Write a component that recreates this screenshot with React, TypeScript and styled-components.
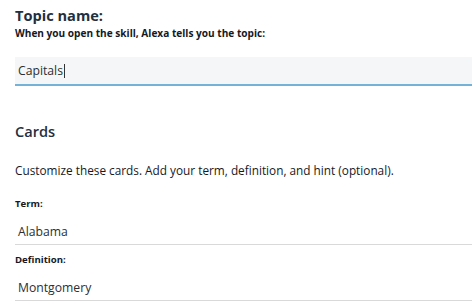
import React from 'react';
import styled, { createGlobalStyle } from 'styled-components';

const GlobalStyle = createGlobalStyle`
  html, body {
    margin: 0;
    padding: 0;
    background: #ffffff;
  }
  body {
    font-family: "Open Sans", "Noto Sans", Arial, sans-serif;
    color: #16191f;
  }
`;

const Page = styled.div`
  width: 474px;
  height: 304px;
  overflow: hidden;
  padding: 4px 2px 0 15px;
  box-sizing: border-box;
  display: flex;
  flex-direction: column;
`;

const Heading = styled.h2`
  margin: 0;
  font-size: 14.6px;
  line-height: 22px;
  font-weight: 700;
  color: #232f3e;
`;

const SectionHeading = styled(Heading)`
  margin-top: 34px;
  font-weight: 600;
`;

const Hint = styled.div`
  font-size: 10.1px;
  line-height: 14px;
  font-weight: 700;
  color: #16191f;
`;

const FieldLabel = styled.div<{ $top: number }>`
  margin-top: ${(p) => p.$top}px;
  font-size: 9.6px;
  line-height: 14px;
  font-weight: 700;
  color: #16191f;
`;

const Description = styled.p`
  margin: 20px 0 0;
  font-size: 11.8px;
  line-height: 16px;
  color: #16191f;
`;

const TextField = styled.div<{ $filled?: boolean }>`
  display: flex;
  align-items: center;
  height: ${(p) => (p.$filled ? 27 : 26)}px;
  margin-top: ${(p) => (p.$filled ? 17 : 7)}px;
  padding-left: 3px;
  background: ${(p) => (p.$filled ? '#f5f6f7' : 'transparent')};
  border-bottom: ${(p) => (p.$filled ? '2px solid #74b2d7' : '1px solid #d9d9d9')};
  font-size: 12.2px;
  color: #2b2f33;
`;

const Caret = styled.span`
  display: inline-block;
  width: 1px;
  height: 14px;
  background: #333;
  margin-left: 1px;
`;

const Value = styled.span``;

export default function App(): JSX.Element {
  return (
    <>
      <GlobalStyle />
      <Page>
        <Heading>Topic name:</Heading>
        <Hint>When you open the skill, Alexa tells you the topic:</Hint>
        <TextField $filled>
          <Value>Capitals</Value>
          <Caret />
        </TextField>
        <SectionHeading>Cards</SectionHeading>
        <Description>Customize these cards. Add your term, definition, and hint (optional).</Description>
        <FieldLabel $top={19}>Term:</FieldLabel>
        <TextField>
          <Value>Alabama</Value>
        </TextField>
        <FieldLabel $top={8}>Definition:</FieldLabel>
        <TextField>
          <Value>Montgomery</Value>
        </TextField>
      </Page>
    </>
  );
}
